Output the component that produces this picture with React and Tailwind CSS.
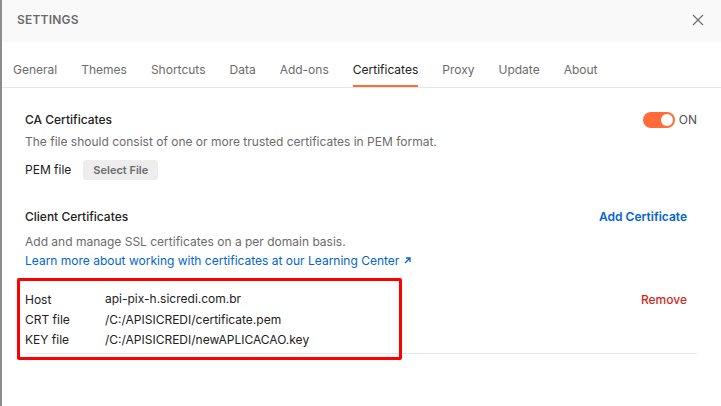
import React from "react";

export default function App() {
  const tabs = ["General", "Themes", "Shortcuts", "Data", "Add-ons", "Certificates", "Proxy", "Update", "About"];
  return (
    <div
      className="w-[721px] h-[406px] bg-white border-l-2 border-[#8c8c8c] overflow-hidden text-[12px] text-[#212121]"
      style={{ fontFamily: "Inter, 'Noto Sans', sans-serif" }}
    >
      <div className="h-[42px] bg-[#f9f9f9] flex items-center justify-between pl-[15px] pr-[17px]">
        <span className="text-[12px] font-semibold text-[#6b6b6b] tracking-[0.2px] -mt-[2px]">SETTINGS</span>
        <svg width="12" height="12" viewBox="0 0 12 12" className="text-[#6b6b6b] -mt-[2px]">
          <path d="M1 1L11 11M11 1L1 11" stroke="currentColor" strokeWidth="1.1" fill="none" />
        </svg>
      </div>
      <div className="h-[46px] flex items-stretch border-b border-[#e6e6e6] pl-[11px] gap-[24px]">
        {tabs.map((t) => (
          <div
            key={t}
            className={
              "flex items-center pt-[13px] border-b-2 text-[12px] " +
              (t === "Certificates" ? "border-[#ff6c37] text-[#212121]" : "border-transparent text-[#6b6b6b]")
            }
          >
            <span>{t}</span>
          </div>
        ))}
      </div>
      <div className="pl-[23px] pr-[24px] pt-[22px]">
        <div className="flex items-center justify-between h-[20px]">
          <span className="font-medium">CA Certificates</span>
          <div className="flex items-center gap-[4px]">
            <div className="w-[32px] h-[16px] rounded-full bg-[#ff6c37] flex items-center justify-end pr-[2px]">
              <div className="w-[12px] h-[12px] rounded-full bg-white" />
            </div>
            <span className="text-[#505050]">ON</span>
          </div>
        </div>
        <div className="text-[#6b6b6b] mt-[2px] h-[20px] leading-[20px]">
          The file should consist of one or more trusted certificates in PEM format.
        </div>
        <div className="flex items-center gap-[12px] mt-[8px] h-[20px]">
          <span>PEM file</span>
          <span className="bg-[#ededed] rounded-[3px] px-[10px] h-[20px] flex items-center text-[11px] font-semibold text-[#6b6b6b]">
            Select File
          </span>
        </div>
        <div className="flex items-center justify-between h-[20px] mt-[27px] pr-[10px]">
          <span className="font-medium">Client Certificates</span>
          <span className="font-semibold text-[#0265d2]">Add Certificate</span>
        </div>
        <div className="text-[#6b6b6b] mt-[5px] h-[19px] leading-[19px]">
          Add and manage SSL certificates on a per domain basis.
        </div>
        <div className="text-[#0265d2] h-[19px] leading-[19px] flex items-center gap-[4px]">
          <span>Learn more about working with certificates at our Learning Center</span>
          <svg width="9" height="9" viewBox="0 0 9 9">
            <path d="M2 7L7 2M3 2H7V6" stroke="currentColor" strokeWidth="1.3" fill="none" />
          </svg>
        </div>
        <div className="relative mt-[9px] pt-[11px] pb-[4px] border-b border-[#e6e6e6]">
          <div className="absolute left-[-8px] top-[-1px] w-[385px] h-[82px] border-[3px] border-[#ff0000] rounded-[2px] pointer-events-none" />
          <div className="flex items-center h-[20px] pr-[10px]">
            <span className="w-[80px]">Host</span>
            <span className="flex-1 -mt-[3px]">api-pix-h.sicredi.com.br</span>
            <span className="text-[#d0291b] font-medium">Remove</span>
          </div>
          <div className="flex items-center h-[20px]">
            <span className="w-[80px]">CRT file</span>
            <span>/C:/APISICREDI/certificate.pem</span>
          </div>
          <div className="flex items-center h-[19px]">
            <span className="w-[80px]">KEY file</span>
            <span>/C:/APISICREDI/newAPLICACAO.key</span>
          </div>
        </div>
      </div>
    </div>
  );
}
